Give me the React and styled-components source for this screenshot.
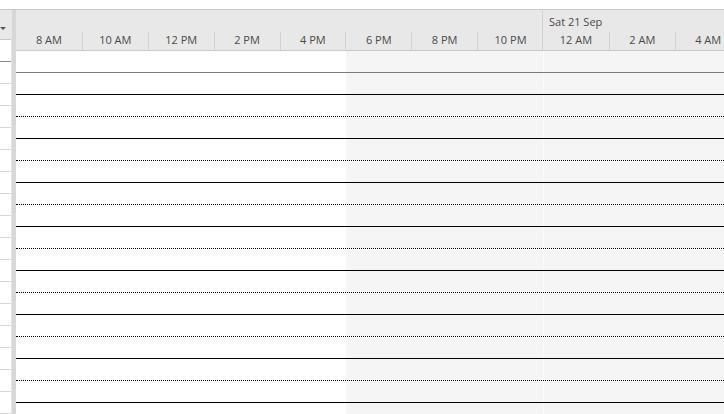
import styled, { createGlobalStyle } from 'styled-components';

const GlobalStyle = createGlobalStyle`
  html, body {
    margin: 0;
    padding: 0;
    background: #fff;
    overflow: hidden;
  }
  body {
    font-family: "Open Sans", "Noto Sans", "Liberation Sans", sans-serif;
  }
`;

const COL = 65.875;
const ROW_COUNT = 17;

const Page = styled.div`
  width: 724px;
  height: 414px;
  overflow: hidden;
  display: flex;
  flex-direction: column;
`;

const TopStrip = styled.div`
  height: 9px;
  background: #fff;
`;

const Main = styled.div`
  flex: 1;
  display: flex;
  border-top: 1px solid #c6c6c6;
  min-height: 0;
`;

const LeftPane = styled.div`
  width: 11px;
  flex-shrink: 0;
  display: flex;
  flex-direction: column;
  overflow: hidden;
`;

const LeftHeader = styled.div`
  height: 40px;
  background: #e8e8e8;
  border-bottom: 1px solid #c8c8c8;
  display: flex;
  align-items: flex-end;
  padding: 0 0 9px 0;
  box-sizing: content-box;
`;

const DropArrow = styled.div`
  width: 0;
  height: 0;
  border-left: 3px solid transparent;
  border-right: 3px solid transparent;
  border-top: 3px solid #555;
`;

const LeftRow = styled.div`
  height: 22px;
  box-sizing: border-box;
  flex-shrink: 0;
  border-bottom: 1px solid ${({ $first }) => ($first ? '#8c8c8c' : '#d8d8d8')};
`;

const Splitter = styled.div`
  width: 4px;
  flex-shrink: 0;
  background: #d7d7d7;
  border-left: 1px solid #e6e6e6;
`;

const Timeline = styled.div`
  flex: 1;
  display: flex;
  flex-direction: column;
  overflow: hidden;
  min-width: 0;
`;

const Header = styled.div`
  display: flex;
  height: 40px;
  background: #e8e8e8;
  border-bottom: 1px solid #c8c8c8;
  box-sizing: content-box;
  flex-shrink: 0;
`;

const DayGroup = styled.div`
  display: flex;
  flex-direction: column;
  flex-shrink: 0;
  border-left: ${({ $divider }) => ($divider ? '1px solid #d2d2d2' : 'none')};
  margin-left: ${({ $divider }) => ($divider ? '-1px' : '0')};
`;

const DayLabel = styled.div`
  height: 22px;
  font-size: 11px;
  color: #4a4a4a;
  line-height: 22px;
  padding-left: 6px;
  white-space: nowrap;
  padding-top: 1px;
  box-sizing: border-box;
`;

const HourRow = styled.div`
  display: flex;
  height: 18px;
`;

const HourCell = styled.div`
  width: ${COL}px;
  flex-shrink: 0;
  box-sizing: border-box;
  border-left: ${({ $tick }) => ($tick ? '1px solid #d2d2d2' : 'none')};
  font-size: 11px;
  color: #4a4a4a;
  text-align: center;
  line-height: 15px;
  white-space: nowrap;
`;

const Body = styled.div`
  flex: 1;
  display: flex;
  flex-direction: column;
  background: linear-gradient(
    to right,
    #fff 0 330px,
    #f5f5f5 330px 527px,
    #fbfbfb 527px 528px,
    #f5f5f5 528px
  );
`;

const GridRow = styled.div`
  height: 22px;
  flex-shrink: 0;
  box-sizing: border-box;
  border-bottom: 1px ${({ $kind }) => ($kind === 'dotted' ? 'dotted' : 'solid')}
    ${({ $kind }) => ($kind === 'summary' ? '#7a7a7a' : '#000')};
`;

const days = [
  { label: '', hours: ['8 AM', '10 AM', '12 PM', '2 PM', '4 PM', '6 PM', '8 PM', '10 PM'] },
  { label: 'Sat 21 Sep', hours: ['12 AM', '2 AM', '4 AM'] },
];

const rowKind = (i) => {
  if (i === 0) return 'summary';
  return i % 2 === 1 ? 'solid' : 'dotted';
};

export default function App() {
  const rows = Array.from({ length: ROW_COUNT }, (_, i) => i);

  return (
    <>
      <GlobalStyle />
      <Page>
        <TopStrip />
        <Main>
          <LeftPane>
            <LeftHeader>
              <DropArrow />
            </LeftHeader>
            {rows.map((i) => (
              <LeftRow key={i} $first={i === 0} />
            ))}
          </LeftPane>
          <Splitter />
          <Timeline>
            <Header>
              {days.map((day, d) => (
                <DayGroup key={d} $divider={d > 0}>
                  <DayLabel>{day.label}</DayLabel>
                  <HourRow>
                    {day.hours.map((h, k) => (
                      <HourCell key={h} $tick={k > 0}>
                        {h}
                      </HourCell>
                    ))}
                  </HourRow>
                </DayGroup>
              ))}
            </Header>
            <Body>
              {rows.map((i) => (
                <GridRow key={i} $kind={rowKind(i)} />
              ))}
            </Body>
          </Timeline>
        </Main>
      </Page>
    </>
  );
}
